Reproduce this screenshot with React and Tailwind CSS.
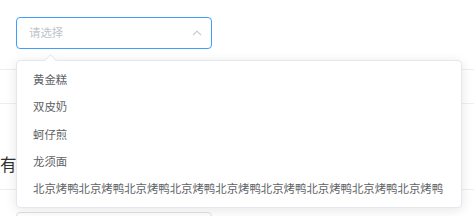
import React from 'react';

const options = ['黄金糕', '双皮奶', '蚵仔煎', '龙须面', '北京烤鸭北京烤鸭北京烤鸭北京烤鸭北京烤鸭北京烤鸭北京烤鸭北京烤鸭北京烤鸭'];

function ChevronUp() {
  return (
    <svg width="10" height="6" viewBox="0 0 10 6" fill="none">
      <path d="M1 5.2 L5 1.2 L9 5.2" stroke="#c0c4cc" strokeWidth="1.1" />
    </svg>
  );
}

export default function App() {
  return (
    <div
      className="relative w-[474px] h-[216px] overflow-hidden bg-white"
      style={{ fontFamily: '"Noto Sans CJK SC", "Noto Sans", sans-serif' }}
    >
      {/* select */}
      <div className="pt-[17px] pl-4">
        <div className="w-[196px] h-8 border border-[#409eff] rounded-[4px] flex items-center justify-between pl-3 pr-[9px]">
          <span className="text-[11.4px] text-[#c0c4cc]">请选择</span>
          <ChevronUp />
        </div>
      </div>

      {/* page content behind the dropdown */}
      <div className="mt-[20px] border-t border-[#ebeef5]" />
      <div className="h-[34px] border-b border-[#ebeef5]" />
      <div className="h-[85px] flex items-end pb-[17px]">
        <span className="text-[16.5px] leading-none text-[#303133]">有</span>
      </div>
      <div className="border-t border-[#ebeef5]" />
      <div className="pt-[22px] pl-4">
        <div className="w-[196px] h-8 border border-[#dcdfe6] rounded-[4px]" />
      </div>

      {/* dropdown popover */}
      <div className="absolute left-4 top-[60px] w-[446px] bg-white border border-[#e4e7ed] rounded-[4px] shadow-[0_2px_12px_0_rgba(0,0,0,0.1)] py-[5px]">
        <div className="absolute -top-[5px] left-[29px] w-[9px] h-[9px] bg-white border-l border-t border-[#e4e7ed] rotate-45" />
        {options.map((opt) => (
          <div
            key={opt}
            className="h-[27.3px] flex items-center px-4 text-[11.4px] text-[#606266] whitespace-nowrap"
          >
            {opt}
          </div>
        ))}
      </div>
    </div>
  );
}
